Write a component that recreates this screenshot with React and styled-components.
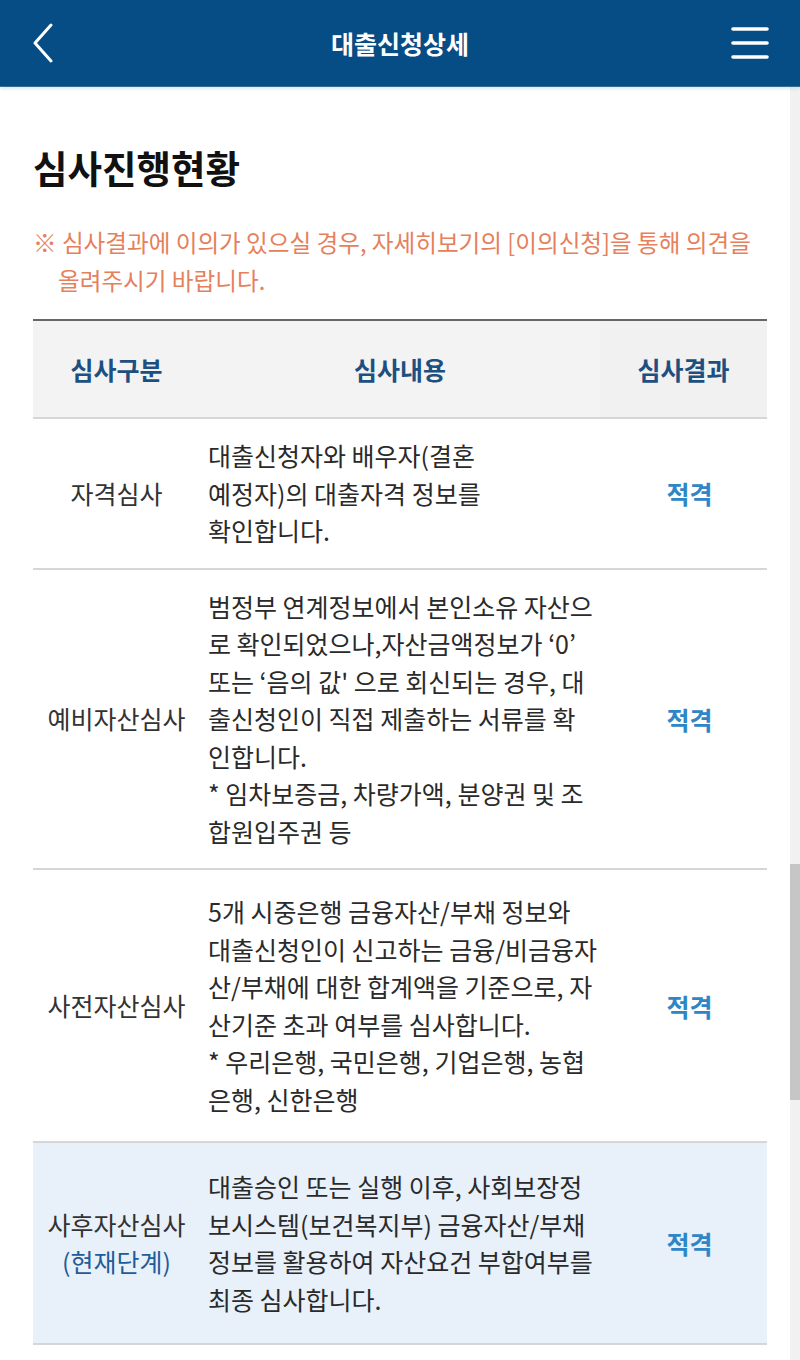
import React from "react";
import styled, { createGlobalStyle } from "styled-components";

const Global = createGlobalStyle`
  html, body { margin: 0; padding: 0; background: #fff; }
  body { font-family: "Noto Sans CJK KR", "Noto Sans", sans-serif; color: #222; }
  #root { min-height: 100vh; }
`;

const Page = styled.div`
  display: flex;
  flex-direction: column;
  min-height: 1360px;
`;

const TopBar = styled.header`
  height: 86px;
  background: #064c85;
  border-bottom: 1px solid #3d6c93;
  box-shadow: 0 2px 3px rgba(150, 200, 220, 0.35);
  display: grid;
  grid-template-columns: 80px 1fr 80px;
  align-items: center;
  position: relative;
  z-index: 1;
`;

const IconButton = styled.button`
  border: 0;
  background: none;
  padding: 0;
  height: 86px;
  display: flex;
  align-items: center;
  justify-content: ${(p) => (p.$right ? "flex-end" : "flex-start")};
  padding-${(p) => (p.$right ? "right" : "left")}: 31px;
`;

const TopTitle = styled.h1`
  margin: 0;
  text-align: center;
  color: #fff;
  font-size: 25px;
  font-weight: 700;
`;

const Body = styled.div`
  flex: 1;
  display: flex;
`;

const Main = styled.main`
  flex: 1;
  padding: 56px 23px 0 33px;
`;

const ScrollTrack = styled.div`
  width: 10px;
  background: #f1f1f1;
  display: flex;
  flex-direction: column;
`;

const ScrollThumb = styled.div`
  margin-top: 777px;
  height: 236px;
  background: #c6c6c6;
`;

const SectionTitle = styled.h2`
  margin: 0;
  font-size: 37.5px;
  font-weight: 700;
  color: #111;
  line-height: 48px;
`;

const Notice = styled.p`
  margin: 32px 0 0;
  color: #e6805c;
  font-size: 23.6px;
  line-height: 38px;
  padding-left: 25px;
  text-indent: -25px;
  word-break: keep-all;
`;

const Table = styled.div`
  margin-top: 20px;
  border-top: 2px solid #666;
`;

const Row = styled.div`
  display: grid;
  grid-template-columns: 167px 400px 167px;
  align-items: center;
  background: ${(p) => (p.$current ? "#e8f0fa" : "#fff")};
  border-bottom: 2px solid #d6d6d6;
  padding: ${(p) => p.$pad}px 0;
`;

const HeadRow = styled(Row)`
  background: #f3f3f3;
  height: 96px;
  padding: 0;
`;

const HeadCell = styled.div`
  text-align: center;
  font-size: 25px;
  font-weight: 700;
  color: #1d4f80;
  height: 100%;
  display: flex;
  align-items: center;
  justify-content: center;
  background: ${(p) => (p.$shade ? "#f1f1f1" : "transparent")};
`;

const Label = styled.div`
  text-align: center;
  font-size: 25px;
  line-height: 37.5px;
  color: #333;
`;

const Stage = styled.span`
  display: block;
  color: #1f5c99;
`;

const Content = styled.div`
  padding-left: 8px;
  font-size: 25px;
  line-height: 37.5px;
  color: #2a2a2a;
  white-space: nowrap;
`;

const Result = styled.div`
  text-align: center;
  font-size: 25px;
  font-weight: 700;
  color: #2f86c6;
  padding-left: 12px;
`;

const rows = [
  {
    label: "자격심사",
    pad: 18,
    lines: ["대출신청자와 배우자(결혼", "예정자)의 대출자격 정보를", "확인합니다."],
  },
  {
    label: "예비자산심사",
    pad: 18,
    lines: [
      "범정부 연계정보에서 본인소유 자산으",
      "로 확인되었으나,자산금액정보가 ‘0’",
      "또는 ‘음의 값' 으로 회신되는 경우, 대",
      "출신청인이 직접 제출하는 서류를 확",
      "인합니다.",
      "* 임차보증금, 차량가액, 분양권 및 조",
      "합원입주권 등",
    ],
  },
  {
    label: "사전자산심사",
    pad: 23,
    lines: [
      "5개 시중은행 금융자산/부채 정보와",
      "대출신청인이 신고하는 금융/비금융자",
      "산/부채에 대한 합계액을 기준으로, 자",
      "산기준 초과 여부를 심사합니다.",
      "* 우리은행, 국민은행, 기업은행, 농협",
      "은행, 신한은행",
    ],
  },
  {
    label: "사후자산심사",
    stage: "(현재단계)",
    current: true,
    pad: 25,
    lines: [
      "대출승인 또는 실행 이후, 사회보장정",
      "보시스템(보건복지부) 금융자산/부채",
      "정보를 활용하여 자산요건 부합여부를",
      "최종 심사합니다.",
    ],
  },
];

export default function App() {
  return (
    <Page>
      <Global />
      <TopBar>
        <IconButton aria-label="뒤로">
          <svg width="24" height="40" viewBox="0 0 24 40">
            <polyline points="20,2 4,20 20,38" fill="none" stroke="#fff" strokeWidth="3" strokeLinecap="round" strokeLinejoin="round" />
          </svg>
        </IconButton>
        <TopTitle>대출신청상세</TopTitle>
        <IconButton $right aria-label="메뉴">
          <svg width="38" height="34" viewBox="0 0 38 34">
            <g stroke="#fff" strokeWidth="3.6" strokeLinecap="round">
              <line x1="2" y1="3" x2="36" y2="3" />
              <line x1="2" y1="17" x2="36" y2="17" />
              <line x1="2" y1="31" x2="36" y2="31" />
            </g>
          </svg>
        </IconButton>
      </TopBar>
      <Body>
        <Main>
          <SectionTitle>심사진행현황</SectionTitle>
          <Notice>※ 심사결과에 이의가 있으실 경우, 자세히보기의 [이의신청]을 통해 의견을 올려주시기 바랍니다.</Notice>
          <Table>
            <HeadRow>
              <HeadCell>심사구분</HeadCell>
              <HeadCell>심사내용</HeadCell>
              <HeadCell $shade>심사결과</HeadCell>
            </HeadRow>
            {rows.map((r) => (
              <Row key={r.label} $pad={r.pad} $current={r.current}>
                <Label>
                  {r.label}
                  {r.stage && <Stage>{r.stage}</Stage>}
                </Label>
                <Content>
                  {r.lines.map((l, i) => (
                    <div key={i}>{l}</div>
                  ))}
                </Content>
                <Result>적격</Result>
              </Row>
            ))}
          </Table>
        </Main>
        <ScrollTrack>
          <ScrollThumb />
        </ScrollTrack>
      </Body>
    </Page>
  );
}
